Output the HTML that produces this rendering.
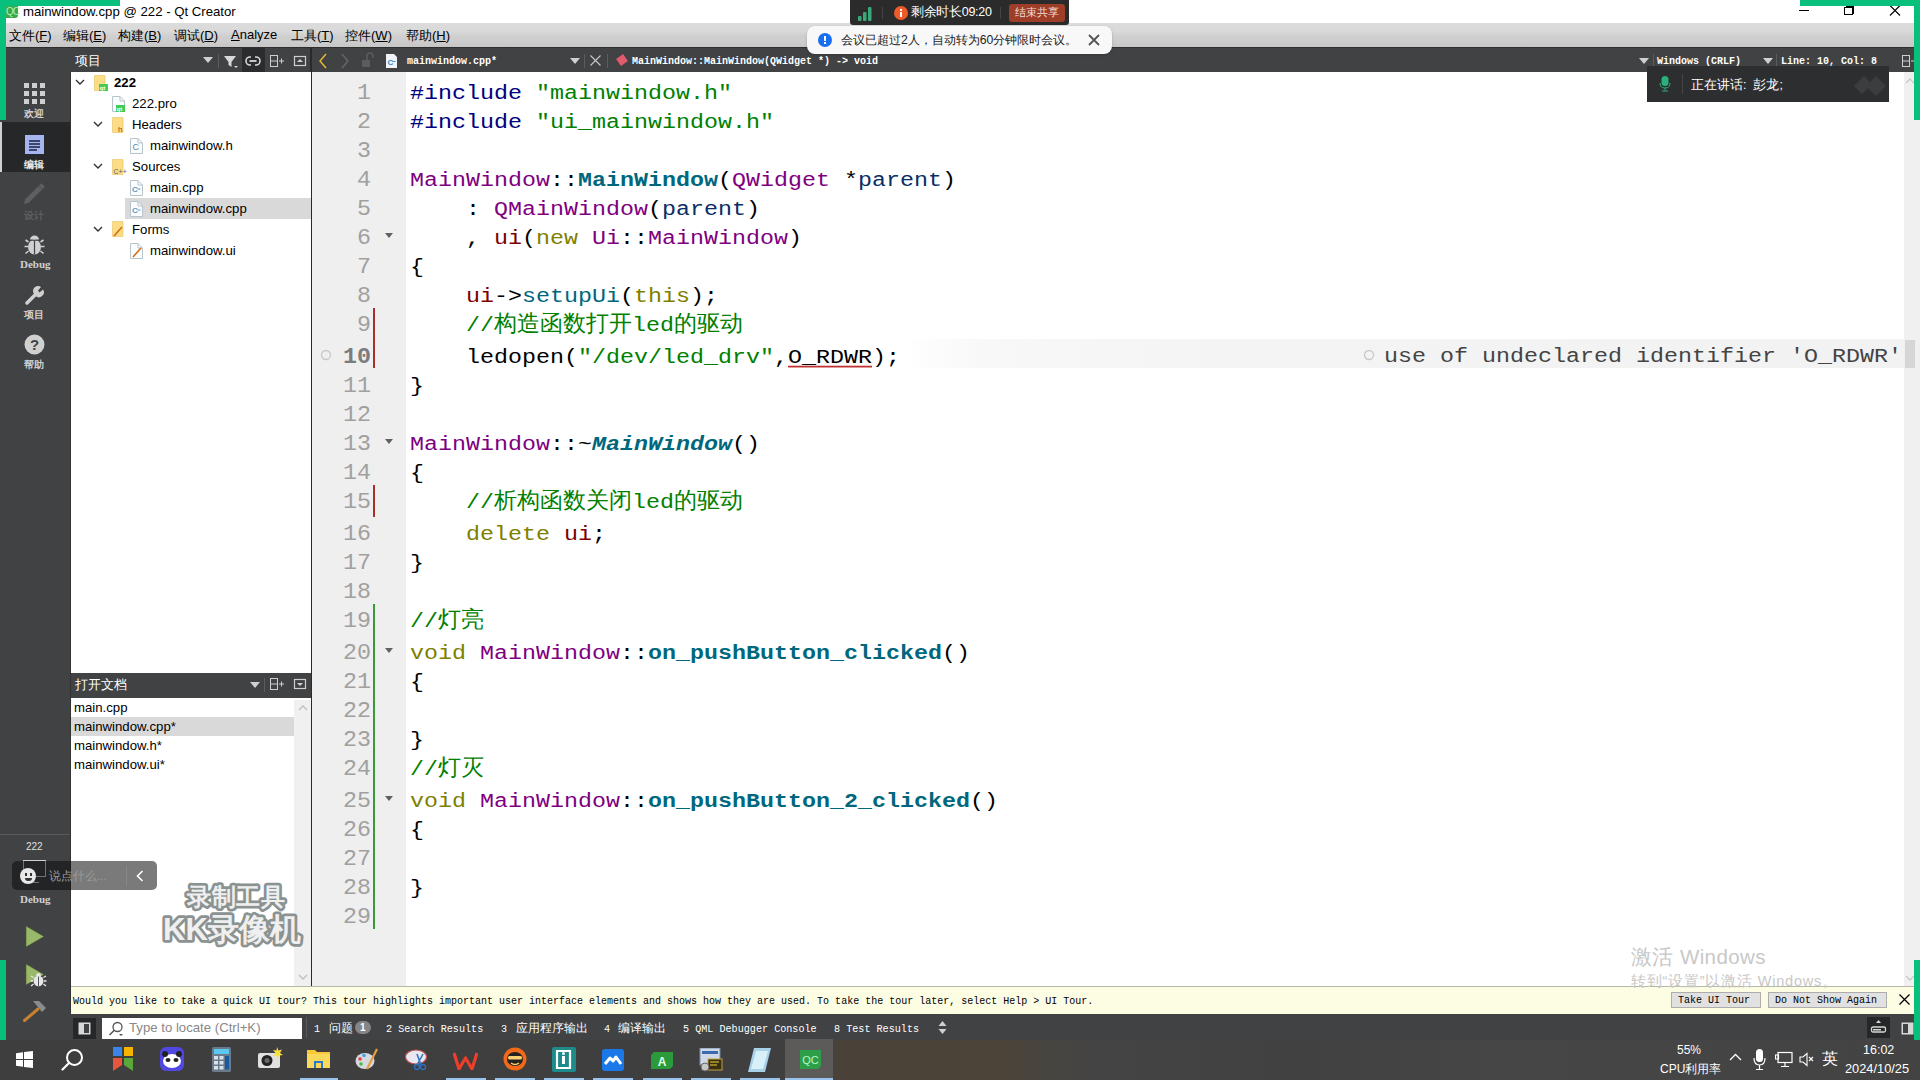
<!DOCTYPE html>
<html><head><meta charset="utf-8">
<style>
*{box-sizing:border-box;margin:0;padding:0}
html,body{width:1920px;height:1080px;overflow:hidden;background:#fff;font-family:"Liberation Sans",sans-serif}
.a{position:absolute}
.mono{font-family:"Liberation Mono",monospace}
.mb{font-weight:bold}
#title{left:0;top:0;width:1920px;height:23px;background:#fff}
#menu{left:0;top:23px;width:1920px;height:24px;background:linear-gradient(#dcdcdc 0%,#d9d9d9 35%,#cfcfcf 55%,#cdcdcd 75%,#c6c6c6 100%)}
#tb{left:0;top:47px;width:1920px;height:25px;background:#404244;border-top:1px solid #2e2e2e}
#modebar{z-index:2;left:0;top:72px;width:71px;height:968px;background:#404244}
#tree{left:71px;top:72px;width:240px;height:601px;background:#fff}
#odhdr{left:71px;top:673px;width:240px;height:25px;background:#404244}
#od{left:71px;top:698px;width:240px;height:288px;background:#fff}
#split{left:311px;top:72px;width:1px;height:915px;background:#2a2a2a}
#gutter{left:312px;top:72px;width:94px;height:915px;background:#efefef}
#code{left:406px;top:72px;width:1514px;height:915px;background:#fff}
#tour{left:71px;top:986px;width:1849px;height:28px;background:#fdfde4;border-top:1px solid #b8b8a8}
#status{left:0;top:1014px;width:1920px;height:26px;background:#404244}
#taskbar{left:0;top:1040px;width:1920px;height:40px;background:linear-gradient(90deg,#3e3e3e 0px,#3f3f3f 800px,#4a4238 835px,#4c4438 1000px,#474540 1045px,#444 1100px,#414141 1300px,#464646 1500px,#434343 1920px)}
.code{font-family:"Liberation Mono",monospace;font-size:23.33px;white-space:pre}
.sq{transform:scaleY(0.88);transform-origin:0 20.7px}
.cj{display:inline-block;transform:scaleY(1.136);transform-origin:0 20.7px;line-height:29px;height:29px;vertical-align:top}
.sqn{transform:scaleY(0.92);transform-origin:0 20.7px}
.ln{font-family:"Liberation Mono",monospace;font-size:23.33px;color:#a0a0a0;text-align:right;width:60px;white-space:pre}
</style></head><body>
<div id="title" class="a">
<div class="a" style="left:6px;top:6px;width:12px;height:12px;background:#3aa84a;border-radius:0 0 3px 0"></div>
<div class="a" style="left:6px;top:6px;font:10px 'Liberation Sans';color:#a8f5b8;letter-spacing:-1px;line-height:12px">QC</div>
<div class="a" style="left:23px;top:4px;font-size:13.2px;color:#000;white-space:pre">mainwindow.cpp @ 222 - Qt Creator</div>
<div class="a" style="left:1799px;top:10px;width:10px;height:1px;background:#000"></div>
<div class="a" style="left:1844px;top:7px;width:9px;height:8px;border:1px solid #000"></div>
<div class="a" style="left:1846px;top:6px;width:8px;height:8px;border-top:1px solid #000;border-right:1px solid #000"></div>
<svg class="a" style="left:1889px;top:5px" width="12" height="11"><path d="M1 0.5L11 10.5M11 0.5L1 10.5" stroke="#000" stroke-width="1.1"/></svg>
</div>
<div id="menu" class="a" style="font-size:13px;color:#000">
<span class="a" style="left:9px;top:4px">文件(<u>F</u>)</span>
<span class="a" style="left:63px;top:4px">编辑(<u>E</u>)</span>
<span class="a" style="left:118px;top:4px">构建(<u>B</u>)</span>
<span class="a" style="left:174px;top:4px">调试(<u>D</u>)</span>
<span class="a" style="left:231px;top:4px"><u>A</u>nalyze</span>
<span class="a" style="left:291px;top:4px">工具(<u>T</u>)</span>
<span class="a" style="left:345px;top:4px">控件(<u>W</u>)</span>
<span class="a" style="left:406px;top:4px">帮助(<u>H</u>)</span>
</div>
<div id="tb" class="a">
<span class="a" style="left:75px;top:5px;font-size:12.5px;color:#fff">项目</span>
<div class="a" style="left:310px;top:0;width:2px;height:25px;background:#2a2a2a"></div>
<svg class="a" style="left:203px;top:9px" width="10" height="6"><path d="M0 0H10L5 6Z" fill="#d0d0d0"/></svg>
<div class="a" style="left:218px;top:6px;width:1px;height:14px;background:#5a5c5e"></div>
<svg class="a" style="left:223px;top:6px" width="16" height="16"><path d="M1 2H13L8.5 8V13L5.5 11V8Z" fill="#d8d8d8"/><path d="M11 12H15L13 14Z" fill="#d8d8d8"/></svg>
<div class="a" style="left:242px;top:0px;width:23px;height:24px;background:#2b2c2d"></div>
<svg class="a" style="left:245px;top:6px" width="16" height="14"><path d="M6 3H5A4 4 0 0 0 5 11H6M10 3H11A4 4 0 0 1 11 11H10" fill="none" stroke="#d8d8d8" stroke-width="1.6"/><path d="M4.5 7H11.5" stroke="#d8d8d8" stroke-width="1.8"/></svg>
<svg class="a" style="left:269px;top:5px" width="16" height="16"><rect x="1.5" y="2.5" width="7" height="11" fill="none" stroke="#cfcfcf"/><path d="M1.5 8H8.5M10 8H15M12.5 5.5V10.5" stroke="#cfcfcf"/></svg>
<svg class="a" style="left:293px;top:6px" width="14" height="14"><rect x="1.5" y="2.5" width="11" height="9" fill="none" stroke="#cfcfcf" stroke-width="1.2"/><path d="M4 8L7 5L10 8Z" fill="#cfcfcf"/></svg>
<svg class="a" style="left:318px;top:5px" width="10" height="16"><path d="M8 1L2 8L8 15" fill="none" stroke="#e6b830" stroke-width="1.5"/></svg>
<svg class="a" style="left:340px;top:5px" width="10" height="16"><path d="M2 1L8 8L2 15" fill="none" stroke="#666" stroke-width="1.5"/></svg>
<svg class="a" style="left:362px;top:4px" width="14" height="16"><rect x="0" y="8" width="8" height="7" fill="#5c5c5c"/><path d="M5 8V4A3 3 0 0 1 11 4V6" fill="none" stroke="#5c5c5c" stroke-width="1.5"/></svg>
<svg class="a" style="left:386px;top:6px" width="11" height="14"><path d="M0 0H8L11 3V14H0Z" fill="#f0f4f8"/><text x="1.5" y="10.5" font-size="8" fill="#3a86c8" font-family="Liberation Sans" font-weight="bold">C</text><path d="M6.5 7.5H9.5" stroke="#3a86c8" stroke-width="0.9"/></svg>
<span class="a mono mb" style="left:407px;top:8px;font-size:10px;color:#fff;white-space:pre">mainwindow.cpp*</span>
<svg class="a" style="left:570px;top:10px" width="10" height="6"><path d="M0 0H10L5 6Z" fill="#d0d0d0"/></svg>
<div class="a" style="left:584px;top:6px;width:1px;height:14px;background:#5a5c5e"></div>
<svg class="a" style="left:590px;top:7px" width="11" height="11"><path d="M0.5 0.5L10.5 10.5M10.5 0.5L0.5 10.5" stroke="#c8c8c8" stroke-width="1.1"/></svg>
<div class="a" style="left:607px;top:6px;width:1px;height:14px;background:#5a5c5e"></div>
<svg class="a" style="left:616px;top:6px" width="12" height="12"><path d="M6 0L12 6L6 12L0 6Z" fill="#e05b6e" transform="rotate(10 6 6)"/></svg>
<span class="a mono mb" style="left:632px;top:8px;font-size:10px;color:#fff;white-space:pre">MainWindow::MainWindow(QWidget *) -> void</span>
<svg class="a" style="left:1639px;top:10px" width="10" height="6"><path d="M0 0H10L5 6Z" fill="#d0d0d0"/></svg>
<div class="a" style="left:1653px;top:6px;width:1px;height:14px;background:#5a5c5e"></div>
<span class="a mono mb" style="left:1657px;top:8px;font-size:10px;color:#fff;white-space:pre">Windows (CRLF)</span>
<svg class="a" style="left:1763px;top:10px" width="10" height="6"><path d="M0 0H10L5 6Z" fill="#d0d0d0"/></svg>
<div class="a" style="left:1776px;top:6px;width:1px;height:14px;background:#5a5c5e"></div>
<span class="a mono mb" style="left:1781px;top:8px;font-size:10px;color:#fff;white-space:pre">Line: 10, Col: 8</span>
<svg class="a" style="left:1901px;top:5px" width="14" height="16"><rect x="1.5" y="2.5" width="7" height="11" fill="none" stroke="#cfcfcf"/><path d="M1.5 8H8.5M10 8H14" stroke="#cfcfcf"/></svg>
</div>
<div id="modebar" class="a">
<div class="a" style="left:0;top:50px;width:70px;height:50px;background:#262728"></div>
<div class="a" style="left:70px;top:0;width:1px;height:941px;background:#333"></div>
<svg class="a" style="left:24px;top:11px" width="21" height="21"><g fill="#cfcfcf"><rect x="0" y="0" width="5" height="5"/><rect x="8" y="0" width="5" height="5"/><rect x="16" y="0" width="5" height="5"/><rect x="0" y="8" width="5" height="5"/><rect x="8" y="8" width="5" height="5"/><rect x="16" y="8" width="5" height="5"/><rect x="0" y="16" width="5" height="5"/><rect x="8" y="16" width="5" height="5"/><rect x="16" y="16" width="5" height="5"/></g></svg>
<span class="a" style="left:24px;top:35px;font-size:10px;font-weight:bold;color:#d0d0d0">欢迎</span>
<div class="a" style="left:25px;top:63px;width:19px;height:19px;background:#a6b4f0"></div>
<svg class="a" style="left:25px;top:63px" width="19" height="19"><path d="M4 6H15M4 9H15M4 12H15M4 15H12" stroke="#1a2040" stroke-width="1.3"/></svg>
<span class="a" style="left:24px;top:86px;font-size:10px;font-weight:bold;color:#e8e8e8">编辑</span>
<svg class="a" style="left:22px;top:110px" width="24" height="24"><path d="M19.2 1.2L22.8 4.8L6.8 20.8L2 22L3.2 17.2Z" fill="#5e5f61"/><path d="M16.5 3.9L20.1 7.5" stroke="#404244" stroke-width="0.8"/></svg>
<span class="a" style="left:24px;top:137px;font-size:10px;font-weight:bold;color:#5e5f61">设计</span>
<svg class="a" style="left:24px;top:162px" width="21" height="21"><path d="M4.5 8L1.5 6M16.5 8L19.5 6M4 12.5H0.5M17 12.5H20.5M4.5 17L1.5 19.5M16.5 17L19.5 19.5" stroke="#d0d0d0" stroke-width="1.6"/><ellipse cx="10.5" cy="13" rx="6.5" ry="7.5" fill="#d0d0d0"/><path d="M6 5.5A4.5 4 0 0 1 15 5.5Z" fill="#d0d0d0"/><path d="M10.5 6V20.5" stroke="#404244" stroke-width="1.2"/><path d="M4.5 6.5H16.5" stroke="#404244" stroke-width="0.8"/></svg>
<span class="a" style="left:20px;top:186px;font-family:'Liberation Serif',serif;font-size:11px;font-weight:bold;color:#d0d0d0;letter-spacing:0px">Debug</span>
<svg class="a" style="left:24px;top:212px" width="21" height="21"><path d="M3 19L12 10" stroke="#d0d0d0" stroke-width="3.5" stroke-linecap="round"/><path d="M11 11A5 5 0 0 1 17 3L14 6.5L15.5 8.5L19 5.5A5 5 0 0 1 11.5 12Z" fill="#d0d0d0"/></svg>
<span class="a" style="left:24px;top:236px;font-size:10px;font-weight:bold;color:#d0d0d0">项目</span>
<svg class="a" style="left:24px;top:262px" width="21" height="21"><circle cx="10.5" cy="10.5" r="10" fill="#d0d0d0"/><text x="10.5" y="16" text-anchor="middle" font-family="Liberation Sans" font-weight="bold" font-size="15" fill="#404244">?</text></svg>
<span class="a" style="left:24px;top:286px;font-size:10px;font-weight:bold;color:#d0d0d0">帮助</span>
<div class="a" style="left:0;top:762px;width:70px;height:1px;background:#58595b"></div>
<span class="a" style="left:26px;top:769px;font-size:10px;color:#e0e0e0">222</span>
<svg class="a" style="left:23px;top:788px" width="24" height="26"><rect x="0.5" y="0.5" width="22" height="16" fill="none" stroke="#cfcfcf"/><path d="M11 17V22M6 22.5H16" stroke="#cfcfcf"/></svg>
<span class="a" style="left:20px;top:821px;font-family:'Liberation Serif',serif;font-size:11px;font-weight:bold;color:#d0d0d0;letter-spacing:0px">Debug</span>
<svg class="a" style="left:25px;top:853px" width="20" height="23"><path d="M1 1L19 11.5L1 22Z" fill="#9ab86a" stroke="#4a5a30" stroke-width="0.6"/></svg>
<svg class="a" style="left:25px;top:891px" width="24" height="25"><path d="M1 1L19 11.5L1 22Z" fill="#9ab86a" stroke="#4a5a30" stroke-width="0.6"/><path d="M8.5 14.5L6 13M18.5 14.5L21 13M8 18H5.5M19 18H21.5M8.5 21L6 23M18.5 21L21 23" stroke="#e8e8e8" stroke-width="1.3"/><ellipse cx="13.5" cy="18" rx="5" ry="5.2" fill="#e8e8e8"/><circle cx="13.5" cy="12.3" r="2.3" fill="#e8e8e8"/><path d="M13.5 13.5V23" stroke="#404244" stroke-width="0.9"/></svg>
<svg class="a" style="left:22px;top:928px" width="26" height="24"><path d="M2.5 20.5L16 9" stroke="#c8822e" stroke-width="3" stroke-linecap="round"/><path d="M11 1L17 1L24 8L20 12Z" fill="#8c8c8c"/></svg>
</div>
<div id="tree" class="a" style="font-size:13.2px;color:#000"><div class="a" style="left:54px;top:126px;width:186px;height:21px;background:#d9d9d9"></div><svg class="a" style="left:4px;top:7px" width="10" height="7"><path d="M1 1L5 5L9 1" fill="none" stroke="#333" stroke-width="1.4"/></svg><svg class="a" style="left:22px;top:49px" width="10" height="7"><path d="M1 1L5 5L9 1" fill="none" stroke="#333" stroke-width="1.4"/></svg><svg class="a" style="left:22px;top:91px" width="10" height="7"><path d="M1 1L5 5L9 1" fill="none" stroke="#333" stroke-width="1.4"/></svg><svg class="a" style="left:22px;top:154px" width="10" height="7"><path d="M1 1L5 5L9 1" fill="none" stroke="#333" stroke-width="1.4"/></svg><svg class="a" style="left:23px;top:3px" width="15" height="17"><path d="M0.5 0.5H11V15.5H0.5Z" fill="#fcdc84" stroke="#e8c060" stroke-width="0.6"/><rect x="5" y="9" width="9" height="7" fill="#41cd52"/><text x="5.5" y="15" font-size="6" font-family="Liberation Sans" font-weight="bold" fill="#fff">qt</text></svg><span class="a" style="left:43px;top:3px;font-weight:bold">222</span><svg class="a" style="left:41px;top:24px" width="13" height="16"><path d="M0.5 0.5H8L12.5 5V15.5H0.5Z" fill="#fafcfe" stroke="#b8c4cc"/><path d="M8 0.5V5H12.5" fill="none" stroke="#b8c4cc"/><rect x="4" y="9" width="9" height="7" fill="#41cd52"/><text x="4.5" y="15" font-size="6" font-family="Liberation Sans" font-weight="bold" fill="#fff">qt</text></svg><span class="a" style="left:61px;top:24px">222.pro</span><svg class="a" style="left:41px;top:45px" width="15" height="17"><path d="M0.5 0.5H11V15.5H0.5Z" fill="#fcdc84" stroke="#e8c060" stroke-width="0.6"/><text x="6" y="15" font-size="8" font-family="Liberation Sans" fill="#8a4a10">h</text></svg><span class="a" style="left:61px;top:45px">Headers</span><svg class="a" style="left:59px;top:66px" width="13" height="16"><path d="M0.5 0.5H8L12.5 5V15.5H0.5Z" fill="#fafcfe" stroke="#b8c4cc"/><path d="M8 0.5V5H12.5" fill="none" stroke="#b8c4cc"/><text x="2.5" y="12" font-size="9" font-family="Liberation Sans" fill="#5a8aaa">C</text></svg><span class="a" style="left:79px;top:66px">mainwindow.h</span><svg class="a" style="left:41px;top:87px" width="15" height="17"><path d="M0.5 0.5H11V15.5H0.5Z" fill="#fcdc84" stroke="#e8c060" stroke-width="0.6"/><text x="1.5" y="15" font-size="7" font-family="Liberation Sans" fill="#506070">C++</text></svg><span class="a" style="left:61px;top:87px">Sources</span><svg class="a" style="left:59px;top:108px" width="13" height="16"><path d="M0.5 0.5H8L12.5 5V15.5H0.5Z" fill="#fafcfe" stroke="#b8c4cc"/><path d="M8 0.5V5H12.5" fill="none" stroke="#b8c4cc"/><text x="2" y="11.5" font-size="8" font-family="Liberation Sans" font-weight="bold" fill="#5a9ac0">C</text><path d="M7.5 9H10.5" stroke="#5a9ac0"/></svg><span class="a" style="left:79px;top:108px">main.cpp</span><svg class="a" style="left:59px;top:129px" width="13" height="16"><path d="M0.5 0.5H8L12.5 5V15.5H0.5Z" fill="#fafcfe" stroke="#b8c4cc"/><path d="M8 0.5V5H12.5" fill="none" stroke="#b8c4cc"/><text x="2" y="11.5" font-size="8" font-family="Liberation Sans" font-weight="bold" fill="#5a9ac0">C</text><path d="M7.5 9H10.5" stroke="#5a9ac0"/></svg><span class="a" style="left:79px;top:129px">mainwindow.cpp</span><svg class="a" style="left:41px;top:149px" width="15" height="17"><path d="M0.5 0.5H11V15.5H0.5Z" fill="#fcdc84" stroke="#e8c060" stroke-width="0.6"/><path d="M2 15L10 6" stroke="#d0701a" stroke-width="1.6"/></svg><span class="a" style="left:61px;top:150px">Forms</span><svg class="a" style="left:59px;top:171px" width="13" height="16"><path d="M0.5 0.5H8L12.5 5V15.5H0.5Z" fill="#fafcfe" stroke="#b8c4cc"/><path d="M8 0.5V5H12.5" fill="none" stroke="#b8c4cc"/><path d="M3 14L11 5" stroke="#d0701a" stroke-width="1.6"/></svg><span class="a" style="left:79px;top:171px">mainwindow.ui</span></div>
<div id="odhdr" class="a">
<span class="a" style="left:4px;top:4px;font-size:12.5px;color:#fff">打开文档</span>
<svg class="a" style="left:179px;top:9px" width="10" height="6"><path d="M0 0H10L5 6Z" fill="#d0d0d0"/></svg>
<div class="a" style="left:193px;top:5px;width:1px;height:14px;background:#5a5c5e"></div>
<svg class="a" style="left:198px;top:3px" width="16" height="16"><rect x="1.5" y="2.5" width="7" height="11" fill="none" stroke="#cfcfcf"/><path d="M1.5 8H8.5M10 8H15M12.5 5.5V10.5" stroke="#cfcfcf"/></svg>
<svg class="a" style="left:222px;top:4px" width="14" height="14"><rect x="1.5" y="2.5" width="11" height="9" fill="none" stroke="#cfcfcf" stroke-width="1.2"/><path d="M4 6L7 9L10 6Z" fill="#cfcfcf"/></svg>
</div>
<div id="od" class="a" style="font-size:13.2px;color:#000">
<div class="a" style="left:223px;top:2px;width:17px;height:288px;background:#f0f0f0"></div>
<svg class="a" style="left:227px;top:7px" width="10" height="6"><path d="M1 5L5 1L9 5" fill="none" stroke="#c0c0c0" stroke-width="1.3"/></svg>
<svg class="a" style="left:227px;top:276px" width="10" height="6"><path d="M1 1L5 5L9 1" fill="none" stroke="#c0c0c0" stroke-width="1.3"/></svg>
<div class="a" style="left:0;top:19px;width:223px;height:19px;background:#d9d9d9"></div>
<span class="a" style="left:3px;top:2px">main.cpp</span>
<span class="a" style="left:3px;top:21px">mainwindow.cpp*</span>
<span class="a" style="left:3px;top:40px">mainwindow.h*</span>
<span class="a" style="left:3px;top:59px">mainwindow.ui*</span>
</div>
<div id="split" class="a"></div>
<div id="gutter" class="a"></div>
<div id="code" class="a"></div>
<div class="a" style="left:903px;top:339px;width:1001px;height:29px;background:linear-gradient(90deg,#fff 0px,#f8f8f8 80px,#f4f4f4 330px,#f2f2f2 1001px)"></div>
<div class="a" style="left:1904px;top:72px;width:16px;height:915px;background:#f0f0f0"></div>
<div class="a" style="left:1905px;top:340px;width:10px;height:28px;background:#d6d6d6"></div>
<svg class="a" style="left:1905px;top:77px" width="10" height="7"><path d="M1 6L5 2L9 6" fill="none" stroke="#c8c8c8" stroke-width="1.3"/></svg>
<svg class="a" style="left:1905px;top:975px" width="10" height="7"><path d="M1 1L5 5L9 1" fill="none" stroke="#c8c8c8" stroke-width="1.3"/></svg>
<div class="a" style="left:373px;top:308px;width:2px;height:60px;background:#a8302a"></div>
<div class="a" style="left:373px;top:485px;width:2px;height:32px;background:#a8302a"></div>
<div class="a" style="left:373px;top:604px;width:2px;height:325px;background:#3a9a3a"></div>
<svg class="a" style="left:320px;top:349px" width="12" height="12"><circle cx="6" cy="6" r="4.5" fill="none" stroke="#c8c8c8" stroke-width="1.3"/></svg>
<svg class="a" style="left:1363px;top:349px" width="12" height="12"><circle cx="6" cy="6" r="4.5" fill="none" stroke="#c8c8c8" stroke-width="1.3"/></svg>
<div class="a code sq" style="left:1384px;top:342px;height:29px;line-height:29px;color:#444">use of undeclared identifier 'O_RDWR'</div>
<svg class="a" style="left:385px;top:233px" width="8" height="5"><path d="M0 0H8L4 5Z" fill="#606060"/></svg>
<svg class="a" style="left:385px;top:439px" width="8" height="5"><path d="M0 0H8L4 5Z" fill="#606060"/></svg>
<svg class="a" style="left:385px;top:648px" width="8" height="5"><path d="M0 0H8L4 5Z" fill="#606060"/></svg>
<svg class="a" style="left:385px;top:796px" width="8" height="5"><path d="M0 0H8L4 5Z" fill="#606060"/></svg>
<!--CODE-->
<div class="a code sq" style="left:410px;top:79.0px;height:29px;line-height:29px"><span style="color:#000080">#include</span> <span style="color:#008000">"mainwindow.h"</span></div>
<div class="a ln sqn" style="left:311px;top:79.0px;height:29px;line-height:29px;color:#a0a0a0;font-weight:normal">1</div>
<div class="a code sq" style="left:410px;top:108.0px;height:29px;line-height:29px"><span style="color:#000080">#include</span> <span style="color:#008000">"ui_mainwindow.h"</span></div>
<div class="a ln sqn" style="left:311px;top:108.0px;height:29px;line-height:29px;color:#a0a0a0;font-weight:normal">2</div>
<div class="a code sq" style="left:410px;top:137.0px;height:29px;line-height:29px"></div>
<div class="a ln sqn" style="left:311px;top:137.0px;height:29px;line-height:29px;color:#a0a0a0;font-weight:normal">3</div>
<div class="a code sq" style="left:410px;top:166.0px;height:29px;line-height:29px"><span style="color:#800080">MainWindow</span>::<span style="color:#00677c;font-weight:bold">MainWindow</span>(<span style="color:#800080">QWidget</span> *<span style="color:#092e64">parent</span>)</div>
<div class="a ln sqn" style="left:311px;top:166.0px;height:29px;line-height:29px;color:#a0a0a0;font-weight:normal">4</div>
<div class="a code sq" style="left:410px;top:195.0px;height:29px;line-height:29px">    : <span style="color:#800080">QMainWindow</span>(<span style="color:#092e64">parent</span>)</div>
<div class="a ln sqn" style="left:311px;top:195.0px;height:29px;line-height:29px;color:#a0a0a0;font-weight:normal">5</div>
<div class="a code sq" style="left:410px;top:224.0px;height:29px;line-height:29px">    , <span style="color:#800000">ui</span>(<span style="color:#808000">new</span> <span style="color:#800080">Ui</span>::<span style="color:#800080">MainWindow</span>)</div>
<div class="a ln sqn" style="left:311px;top:224.0px;height:29px;line-height:29px;color:#a0a0a0;font-weight:normal">6</div>
<div class="a code sq" style="left:410px;top:253.0px;height:29px;line-height:29px">{</div>
<div class="a ln sqn" style="left:311px;top:253.0px;height:29px;line-height:29px;color:#a0a0a0;font-weight:normal">7</div>
<div class="a code sq" style="left:410px;top:282.0px;height:29px;line-height:29px">    <span style="color:#800000">ui</span>-&gt;<span style="color:#00677c">setupUi</span>(<span style="color:#808000">this</span>);</div>
<div class="a ln sqn" style="left:311px;top:282.0px;height:29px;line-height:29px;color:#a0a0a0;font-weight:normal">8</div>
<div class="a code sq" style="left:410px;top:311.0px;height:29px;line-height:29px">    <span style="color:#008000">//<span class="cj">构造函数打开</span>led<span class="cj">的驱动</span></span></div>
<div class="a ln sqn" style="left:311px;top:311.0px;height:29px;line-height:29px;color:#a0a0a0;font-weight:normal">9</div>
<div class="a code sq" style="left:410px;top:343.0px;height:29px;line-height:29px">    ledopen(<span style="color:#008000">"/dev/led_drv"</span>,<span style="text-decoration:underline;text-decoration-color:#c03030;text-underline-offset:3px">O_RDWR</span>);</div>
<div class="a ln sqn" style="left:311px;top:343.0px;height:29px;line-height:29px;color:#7c7c7c;font-weight:bold">10</div>
<div class="a code sq" style="left:410px;top:372.0px;height:29px;line-height:29px">}</div>
<div class="a ln sqn" style="left:311px;top:372.0px;height:29px;line-height:29px;color:#a0a0a0;font-weight:normal">11</div>
<div class="a code sq" style="left:410px;top:401.0px;height:29px;line-height:29px"></div>
<div class="a ln sqn" style="left:311px;top:401.0px;height:29px;line-height:29px;color:#a0a0a0;font-weight:normal">12</div>
<div class="a code sq" style="left:410px;top:430.0px;height:29px;line-height:29px"><span style="color:#800080">MainWindow</span>::~<span style="color:#00677c;font-weight:bold;font-style:italic">MainWindow</span>()</div>
<div class="a ln sqn" style="left:311px;top:430.0px;height:29px;line-height:29px;color:#a0a0a0;font-weight:normal">13</div>
<div class="a code sq" style="left:410px;top:459.0px;height:29px;line-height:29px">{</div>
<div class="a ln sqn" style="left:311px;top:459.0px;height:29px;line-height:29px;color:#a0a0a0;font-weight:normal">14</div>
<div class="a code sq" style="left:410px;top:488.0px;height:29px;line-height:29px">    <span style="color:#008000">//<span class="cj">析构函数关闭</span>led<span class="cj">的驱动</span></span></div>
<div class="a ln sqn" style="left:311px;top:488.0px;height:29px;line-height:29px;color:#a0a0a0;font-weight:normal">15</div>
<div class="a code sq" style="left:410px;top:520.0px;height:29px;line-height:29px">    <span style="color:#808000">delete</span> <span style="color:#800000">ui</span>;</div>
<div class="a ln sqn" style="left:311px;top:520.0px;height:29px;line-height:29px;color:#a0a0a0;font-weight:normal">16</div>
<div class="a code sq" style="left:410px;top:549.0px;height:29px;line-height:29px">}</div>
<div class="a ln sqn" style="left:311px;top:549.0px;height:29px;line-height:29px;color:#a0a0a0;font-weight:normal">17</div>
<div class="a code sq" style="left:410px;top:578.0px;height:29px;line-height:29px"></div>
<div class="a ln sqn" style="left:311px;top:578.0px;height:29px;line-height:29px;color:#a0a0a0;font-weight:normal">18</div>
<div class="a code sq" style="left:410px;top:607.0px;height:29px;line-height:29px"><span style="color:#008000">//<span class="cj">灯亮</span></span></div>
<div class="a ln sqn" style="left:311px;top:607.0px;height:29px;line-height:29px;color:#a0a0a0;font-weight:normal">19</div>
<div class="a code sq" style="left:410px;top:639.0px;height:29px;line-height:29px"><span style="color:#808000">void</span> <span style="color:#800080">MainWindow</span>::<span style="color:#00677c;font-weight:bold">on_pushButton_clicked</span>()</div>
<div class="a ln sqn" style="left:311px;top:639.0px;height:29px;line-height:29px;color:#a0a0a0;font-weight:normal">20</div>
<div class="a code sq" style="left:410px;top:668.0px;height:29px;line-height:29px">{</div>
<div class="a ln sqn" style="left:311px;top:668.0px;height:29px;line-height:29px;color:#a0a0a0;font-weight:normal">21</div>
<div class="a code sq" style="left:410px;top:697.0px;height:29px;line-height:29px"></div>
<div class="a ln sqn" style="left:311px;top:697.0px;height:29px;line-height:29px;color:#a0a0a0;font-weight:normal">22</div>
<div class="a code sq" style="left:410px;top:726.0px;height:29px;line-height:29px">}</div>
<div class="a ln sqn" style="left:311px;top:726.0px;height:29px;line-height:29px;color:#a0a0a0;font-weight:normal">23</div>
<div class="a code sq" style="left:410px;top:755.0px;height:29px;line-height:29px"><span style="color:#008000">//<span class="cj">灯灭</span></span></div>
<div class="a ln sqn" style="left:311px;top:755.0px;height:29px;line-height:29px;color:#a0a0a0;font-weight:normal">24</div>
<div class="a code sq" style="left:410px;top:787.0px;height:29px;line-height:29px"><span style="color:#808000">void</span> <span style="color:#800080">MainWindow</span>::<span style="color:#00677c;font-weight:bold">on_pushButton_2_clicked</span>()</div>
<div class="a ln sqn" style="left:311px;top:787.0px;height:29px;line-height:29px;color:#a0a0a0;font-weight:normal">25</div>
<div class="a code sq" style="left:410px;top:816.0px;height:29px;line-height:29px">{</div>
<div class="a ln sqn" style="left:311px;top:816.0px;height:29px;line-height:29px;color:#a0a0a0;font-weight:normal">26</div>
<div class="a code sq" style="left:410px;top:845.0px;height:29px;line-height:29px"></div>
<div class="a ln sqn" style="left:311px;top:845.0px;height:29px;line-height:29px;color:#a0a0a0;font-weight:normal">27</div>
<div class="a code sq" style="left:410px;top:874.0px;height:29px;line-height:29px">}</div>
<div class="a ln sqn" style="left:311px;top:874.0px;height:29px;line-height:29px;color:#a0a0a0;font-weight:normal">28</div>
<div class="a code sq" style="left:410px;top:903.0px;height:29px;line-height:29px"></div>
<div class="a ln sqn" style="left:311px;top:903.0px;height:29px;line-height:29px;color:#a0a0a0;font-weight:normal">29</div>
<!--/CODE-->
<div id="tour" class="a">
<span class="a mono" style="left:2px;top:8.5px;font-size:10px;color:#000;white-space:pre">Would you like to take a quick UI tour? This tour highlights important user interface elements and shows how they are used. To take the tour later, select Help &gt; UI Tour.</span>
<div class="a" style="left:1600px;top:5px;width:90px;height:16px;background:#e1e1e1;border:1px solid #adadad"></div>
<span class="a mono" style="left:1607px;top:8px;font-size:10px;color:#000;white-space:pre">Take UI Tour</span>
<div class="a" style="left:1697px;top:5px;width:119px;height:16px;background:#e1e1e1;border:1px solid #adadad"></div>
<span class="a mono" style="left:1704px;top:8px;font-size:10px;color:#000;white-space:pre">Do Not Show Again</span>
<svg class="a" style="left:1828px;top:7px" width="11" height="11"><path d="M0.5 0.5L10.5 10.5M10.5 0.5L0.5 10.5" stroke="#000" stroke-width="1.3"/></svg>
</div>
<div id="status" class="a">
<div class="a" style="left:73px;top:4px;width:23px;height:21px;background:#262728"></div>
<svg class="a" style="left:78px;top:8px" width="13" height="13"><rect x="0.5" y="0.5" width="12" height="12" fill="#d8d8d8"/><rect x="6" y="2" width="5" height="9" fill="#404244"/></svg>
<div class="a" style="left:102px;top:4px;width:200px;height:21px;background:#fff"></div>
<svg class="a" style="left:108px;top:7px" width="16" height="16"><circle cx="9.5" cy="6" r="4.5" fill="none" stroke="#555" stroke-width="1.3"/><path d="M6.5 9L1.5 14" stroke="#555" stroke-width="1.6"/><path d="M11 13H15L13 15Z" fill="#555"/></svg>
<span class="a" style="left:129px;top:6px;font-size:13.2px;color:#888;white-space:pre">Type to locate (Ctrl+K)</span>
<div class="a" style="left:306px;top:3px;width:1px;height:21px;background:#58595b"></div>
<span class="a mono" style="left:314px;top:10px;font-size:10.15px;color:#fff;white-space:pre">1 </span>
<span class="a" style="left:329px;top:6px;font-size:12px;color:#fff">问题</span>
<div class="a" style="left:355px;top:7px;width:16px;height:13px;border-radius:7px;background:#858585"></div>
<span class="a" style="left:360px;top:7px;font-size:10px;line-height:13px;font-weight:bold;color:#fff">1</span>
<span class="a mono" style="left:386px;top:10px;font-size:10.15px;color:#fff;white-space:pre">2 Search Results</span>
<span class="a mono" style="left:501px;top:10px;font-size:10.15px;color:#fff;white-space:pre">3 </span>
<span class="a" style="left:516px;top:6px;font-size:12px;color:#fff">应用程序输出</span>
<span class="a mono" style="left:604px;top:10px;font-size:10.15px;color:#fff;white-space:pre">4 </span>
<span class="a" style="left:618px;top:6px;font-size:12px;color:#fff">编译输出</span>
<span class="a mono" style="left:683px;top:10px;font-size:10.15px;color:#fff;white-space:pre">5 QML Debugger Console</span>
<span class="a mono" style="left:834px;top:10px;font-size:10.15px;color:#fff;white-space:pre">8 Test Results</span>
<svg class="a" style="left:938px;top:6px" width="9" height="16"><path d="M0.5 6L4.5 1L8.5 6Z M0.5 9L4.5 14L8.5 9Z" fill="#cfcfcf"/></svg>
<div class="a" style="left:1867px;top:3px;width:23px;height:21px;background:#262728"></div>
<svg class="a" style="left:1870px;top:5px" width="17" height="17"><path d="M8.5 1L11 4H6Z" fill="#d8d8d8"/><rect x="1.5" y="8" width="14" height="5" rx="1.5" fill="none" stroke="#d8d8d8" stroke-width="1.3"/><rect x="3" y="10" width="8" height="1.5" fill="#d8d8d8"/></svg>
<svg class="a" style="left:1901px;top:8px" width="13" height="13"><rect x="0.5" y="0.5" width="12" height="12" fill="#d8d8d8"/><rect x="2" y="2" width="5" height="9" fill="#404244"/></svg>
</div>
<div id="taskbar" class="a">
<svg class="a" style="left:16px;top:11px" width="17" height="17"><path d="M0 2.3L7 1.3V8H0Z M8 1.1L17 0V8H8Z M0 9H7V15.7L0 14.7Z M8 9H17V17L8 15.9Z" fill="#fff"/></svg>
<svg class="a" style="left:61px;top:8px" width="23" height="23"><circle cx="13.5" cy="9.5" r="7.5" fill="none" stroke="#fff" stroke-width="2"/><path d="M8 15L1.5 21.5" stroke="#fff" stroke-width="2.2" stroke-linecap="round"/></svg>
<svg class="a" style="left:113px;top:7px" width="20" height="24"><rect x="0" y="0" width="9" height="9" fill="#3a86e8"/><rect x="11" y="0" width="9" height="9" fill="#f4b400"/><path d="M0 11H9V18L0 24Z" fill="#e8553a"/><path d="M11 11H20V24L11 18Z" fill="#5aa83a"/></svg>
<div class="a" style="left:160px;top:7px;width:24px;height:24px;border-radius:6px;background:#5048e0"></div>
<svg class="a" style="left:160px;top:7px" width="24" height="24"><ellipse cx="12" cy="14" rx="9" ry="7" fill="#fff"/><ellipse cx="8" cy="13" rx="2.5" ry="2" fill="#222"/><ellipse cx="16" cy="13" rx="2.5" ry="2" fill="#222"/><circle cx="5" cy="7" r="3" fill="#222"/><circle cx="19" cy="7" r="3" fill="#222"/></svg>
<svg class="a" style="left:212px;top:7px" width="19" height="25"><rect x="0" y="0" width="19" height="25" rx="1.5" fill="#6a7a8a"/><rect x="2" y="2" width="15" height="5" fill="#5ac8f0"/><g fill="#d8e0e8"><rect x="2" y="9" width="4" height="3.5"/><rect x="7.5" y="9" width="4" height="3.5"/><rect x="2" y="14" width="4" height="3.5"/><rect x="7.5" y="14" width="4" height="3.5"/><rect x="2" y="19" width="4" height="3.5"/><rect x="7.5" y="19" width="4" height="3.5"/></g><rect x="13" y="9" width="4" height="13.5" fill="#1a5aa0"/></svg>
<svg class="a" style="left:258px;top:7px" width="25" height="22"><rect x="0" y="6" width="22" height="15" rx="2" fill="#e0e0e0"/><circle cx="9" cy="13.5" r="5.5" fill="#222"/><circle cx="9" cy="13.5" r="2.5" fill="#666"/><path d="M19 0L20.5 3.5L24 2.5L22 6L25 8L21 8.5L20 12L18.5 8.5L15 9L17.5 6L15 3L18.5 3.5Z" fill="#f8e040"/></svg>
<svg class="a" style="left:307px;top:9px" width="23" height="20"><path d="M0 1H8L10 3H23V19H0Z" fill="#f8c838"/><path d="M0 5H23V19H0Z" fill="#fad85a"/><rect x="7" y="12" width="9" height="7" fill="#2a78d0"/><rect x="9" y="14" width="5" height="5" fill="#fad85a"/></svg>
<svg class="a" style="left:355px;top:7px" width="24" height="24"><ellipse cx="10" cy="14" rx="9.5" ry="8" fill="#d8d8e0"/><circle cx="5" cy="12" r="1.8" fill="#e04040"/><circle cx="9" cy="8.5" r="1.8" fill="#40a0e0"/><circle cx="6" cy="17" r="1.8" fill="#40c040"/><path d="M12 22L22 2" stroke="#e0a040" stroke-width="2.2"/></svg>
<svg class="a" style="left:405px;top:8px" width="25" height="23"><ellipse cx="11" cy="9" rx="10.5" ry="7" fill="#e8e8f0" stroke="#c05050" stroke-width="1.2"/><path d="M12 6L16 17M18 6L12 17" stroke="#3070c0" stroke-width="1.5"/><circle cx="12" cy="19" r="2.5" fill="none" stroke="#3070c0" stroke-width="1.3"/><circle cx="18" cy="19" r="2.5" fill="none" stroke="#3070c0" stroke-width="1.3"/></svg>
<svg class="a" style="left:453px;top:12px" width="25" height="18"><path d="M1 1L6 17L12.5 6L19 17L24 1" fill="none" stroke="#e8402a" stroke-width="3.2" stroke-linejoin="round"/></svg>
<svg class="a" style="left:503px;top:7px" width="24" height="24"><circle cx="12" cy="12" r="11.5" fill="#f06a1a"/><ellipse cx="12" cy="12" rx="8" ry="7" fill="#222"/><rect x="5" y="9" width="14" height="3.5" rx="1.5" fill="#f8d070"/><path d="M8 16Q12 19 16 16" stroke="#f8d070" stroke-width="1.5" fill="none"/></svg>
<svg class="a" style="left:552px;top:7px" width="24" height="25"><rect x="0" y="0" width="24" height="25" rx="2" fill="#1e8a8a"/><path d="M5 4H18V21H5Z" fill="none" stroke="#fff" stroke-width="2.2"/><rect x="10" y="9" width="3" height="8" fill="#fff"/><circle cx="11.5" cy="6.5" r="1.5" fill="#fff"/></svg>
<svg class="a" style="left:602px;top:9px" width="22" height="22"><rect x="0" y="0" width="22" height="22" rx="3" fill="#1a78e8"/><path d="M3 15L8 9L11 12L14 8L19 15" fill="none" stroke="#fff" stroke-width="3" stroke-linejoin="round"/></svg>
<svg class="a" style="left:651px;top:12px" width="22" height="17"><path d="M3 0H22V14L19 17H0V3Z" fill="#2a9a3a"/><text x="11" y="13.5" text-anchor="middle" font-family="Liberation Sans" font-weight="bold" font-size="12" fill="#e0ffe0">A</text></svg>
<svg class="a" style="left:699px;top:8px" width="24" height="24"><rect x="1" y="0" width="20" height="17" fill="#d0d8e8" stroke="#7a8aa0"/><rect x="3" y="3" width="16" height="3" fill="#3a6ab0"/><rect x="9" y="11" width="14" height="11" fill="#3a3010" stroke="#c0a040"/><path d="M11 14H20M11 17H18" stroke="#f0d040"/><circle cx="6" cy="19" r="4" fill="#c8c8c8" stroke="#666"/></svg>
<svg class="a" style="left:748px;top:8px" width="23" height="24"><path d="M6 0H23L17 24H0Z" fill="#a8d0e8"/><path d="M8 3H20L15 21H3Z" fill="#d8f0f8"/></svg>
<div class="a" style="left:785px;top:-1px;width:48px;height:40px;background:#5c5b59"></div>
<svg class="a" style="left:800px;top:10px" width="21" height="19"><path d="M0 0H21V16L18 19H0Z" fill="#2e9e48"/><text x="10.5" y="14" text-anchor="middle" font-family="Liberation Sans" font-size="11" fill="#b8f8c4">QC</text></svg>
<div class="a" style="left:300px;top:38px;width:38px;height:2px;background:#99c4ef"></div>
<div class="a" style="left:446px;top:38px;width:40px;height:2px;background:#99c4ef"></div>
<div class="a" style="left:495px;top:38px;width:40px;height:2px;background:#99c4ef"></div>
<div class="a" style="left:544px;top:38px;width:40px;height:2px;background:#99c4ef"></div>
<div class="a" style="left:593px;top:38px;width:40px;height:2px;background:#99c4ef"></div>
<div class="a" style="left:643px;top:38px;width:39px;height:2px;background:#99c4ef"></div>
<div class="a" style="left:691px;top:38px;width:40px;height:2px;background:#99c4ef"></div>
<div class="a" style="left:740px;top:38px;width:40px;height:2px;background:#99c4ef"></div>
<div class="a" style="left:785px;top:38px;width:48px;height:2px;background:#99c4ef"></div>
<span class="a" style="left:1677px;top:3px;font-size:12px;color:#fff">55%</span>
<span class="a" style="left:1660px;top:21px;font-size:12px;color:#fff">CPU利用率</span>
<svg class="a" style="left:1729px;top:13px" width="13" height="8"><path d="M1 7L6.5 1.5L12 7" fill="none" stroke="#fff" stroke-width="1.3"/></svg>
<svg class="a" style="left:1753px;top:9px" width="13" height="22"><rect x="3" y="0" width="7" height="13" rx="3.5" fill="#fff"/><path d="M1 9Q1 16 6.5 16Q12 16 12 9M6.5 16V20M3 20.5H10" fill="none" stroke="#fff" stroke-width="1.2"/></svg>
<svg class="a" style="left:1775px;top:11px" width="18" height="17"><rect x="3" y="1.5" width="14" height="10" fill="none" stroke="#fff" stroke-width="1.2"/><path d="M10 11.5V15M6 15.5H14M0.5 4H3.5V8H0.5Z" fill="none" stroke="#fff" stroke-width="1.2"/></svg>
<svg class="a" style="left:1799px;top:12px" width="15" height="15"><path d="M1 5H4L8 1.5V13.5L4 10H1Z" fill="none" stroke="#fff" stroke-width="1.1"/><path d="M10 5L14 9M14 5L10 9" stroke="#fff" stroke-width="1.1"/></svg>
<span class="a" style="left:1822px;top:9px;font-size:16px;color:#fff">英</span>
<span class="a" style="left:1863px;top:3px;font-size:12.5px;color:#fff">16:02</span>
<span class="a" style="left:1845px;top:21px;font-size:12.8px;color:#fff">2024/10/25</span>
</div>
<!--OVERLAY--><div class="a" style="left:0;top:0;width:1920px;height:1080px;z-index:5;pointer-events:none">
<div class="a" style="left:0;top:0;width:120px;height:6px;background:#08bf7c"></div>
<div class="a" style="left:0;top:0;width:6px;height:120px;background:#08bf7c"></div>
<div class="a" style="left:1800px;top:0;width:120px;height:6px;background:#08bf7c"></div>
<div class="a" style="left:1914px;top:0;width:6px;height:120px;background:#08bf7c"></div>
<div class="a" style="left:0;top:960px;width:6px;height:80px;background:#08bf7c"></div>
<div class="a" style="left:1914px;top:960px;width:6px;height:80px;background:#08bf7c"></div>
<div class="a" style="left:0;top:122px;width:2px;height:50px;background:#d0d0d0"></div>
<div class="a" style="left:850px;top:0;width:219px;height:25px;background:#2b2b2c;border-radius:0 0 3px 3px"></div>
<svg class="a" style="left:858px;top:7px" width="16" height="14"><rect x="0" y="9" width="3.5" height="5" rx="1" fill="#3aa878"/><rect x="5" y="5" width="3.5" height="9" rx="1" fill="#3aa878"/><rect x="10" y="0" width="3.5" height="14" rx="1" fill="#3aa878"/></svg>
<div class="a" style="left:882px;top:7px;width:1px;height:12px;background:#444"></div>
<div class="a" style="left:894px;top:6px;width:14px;height:14px;border-radius:7px;background:#f05a28"></div>
<div class="a" style="left:900px;top:9px;width:2px;height:2px;background:#fff"></div>
<div class="a" style="left:900px;top:12px;width:2px;height:5px;background:#fff"></div>
<span class="a" style="left:911px;top:4px;font-size:12.5px;color:#fff;white-space:pre;letter-spacing:-0.3px">剩余时长09:20</span>
<div class="a" style="left:1000px;top:7px;width:1px;height:12px;background:#444"></div>
<div class="a" style="left:1009px;top:4px;width:56px;height:18px;border-radius:3px;background:#9e3e28"></div>
<span class="a" style="left:1015px;top:5px;font-size:11px;color:#f4dcd4;white-space:pre">结束共享</span>
<div class="a" style="left:807px;top:26px;width:305px;height:28px;border-radius:8px;background:#f8f8f8;box-shadow:0 1px 3px rgba(0,0,0,0.18)"></div>
<div class="a" style="left:818px;top:33px;width:14px;height:14px;border-radius:7px;background:#1a6ef0"></div>
<div class="a" style="left:824px;top:36px;width:2px;height:5px;background:#fff"></div>
<div class="a" style="left:824px;top:42px;width:2px;height:2px;background:#fff"></div>
<span class="a" style="left:841px;top:32px;font-size:12.2px;color:#222;white-space:pre">会议已超过2人，自动转为60分钟限时会议。</span>
<svg class="a" style="left:1088px;top:34px" width="12" height="12"><path d="M1 1L11 11M11 1L1 11" stroke="#555" stroke-width="1.8"/></svg>
<div class="a" style="left:1647px;top:66px;width:242px;height:36px;background:#2d2e30"></div>
<svg class="a" style="left:1659px;top:76px" width="12" height="16"><rect x="2.5" y="0" width="7" height="10" rx="3.5" fill="#2ab07a"/><path d="M1 7Q1 12 6 12Q11 12 11 7M6 12V14.5M3 15H9" fill="none" stroke="#2ab07a" stroke-width="1"/></svg>
<div class="a" style="left:1682px;top:74px;width:1px;height:20px;background:#444"></div>
<span class="a" style="left:1691px;top:77px;font-size:12.5px;color:#fff;white-space:pre">正在讲话:  彭龙;</span>
<svg class="a" style="left:1848px;top:72px" width="40" height="26"><path d="M6 14L16 4L24 12L14 22Z M18 14L28 4L38 14L28 24Z" fill="#3c3d3f"/></svg>
<div class="a" style="left:12px;top:861px;width:59px;height:29px;background:rgba(0,0,0,0.45);border-radius:5px 0 0 5px"></div>
<div class="a" style="left:71px;top:861px;width:86px;height:29px;background:rgba(0,0,0,0.52);border-radius:0 5px 5px 0"></div>
<div class="a" style="left:20px;top:868px;width:16px;height:16px;border-radius:8px;background:#e8e8e8"></div>
<div class="a" style="left:25px;top:873px;width:2px;height:3px;background:#333"></div>
<div class="a" style="left:30px;top:873px;width:2px;height:3px;background:#333"></div>
<div class="a" style="left:25px;top:878px;width:7px;height:3px;border-radius:0 0 4px 4px;background:#333"></div>
<span class="a" style="left:49px;top:869px;font-size:11.5px;color:#9a9a9a;white-space:pre">说点什么...</span>
<div class="a" style="left:126px;top:866px;width:1px;height:20px;background:#888"></div>
<svg class="a" style="left:136px;top:870px" width="8" height="12"><path d="M6.5 1L1.5 6L6.5 11" fill="none" stroke="#fff" stroke-width="1.6"/></svg>
<svg class="a" style="left:155px;top:876px" width="160" height="72"><g font-family="Liberation Sans" font-weight="bold" fill="#efefef" stroke="#8a9292" stroke-width="5.5" stroke-linejoin="round" paint-order="stroke"><text x="32" y="29" font-size="24" letter-spacing="0.5">录制工具</text><text x="8" y="64" font-size="31">KK录像机</text></g></svg>
<span class="a" style="left:1631px;top:943px;font-size:20.5px;color:#c8c8c8;white-space:pre;letter-spacing:0.4px">激活 Windows</span>
<span class="a" style="left:1631px;top:972px;font-size:14.5px;color:#c8c8c8;white-space:pre;letter-spacing:0.8px">转到“设置”以激活 Windows。</span>
</div><!--/OVERLAY-->
</body></html>
